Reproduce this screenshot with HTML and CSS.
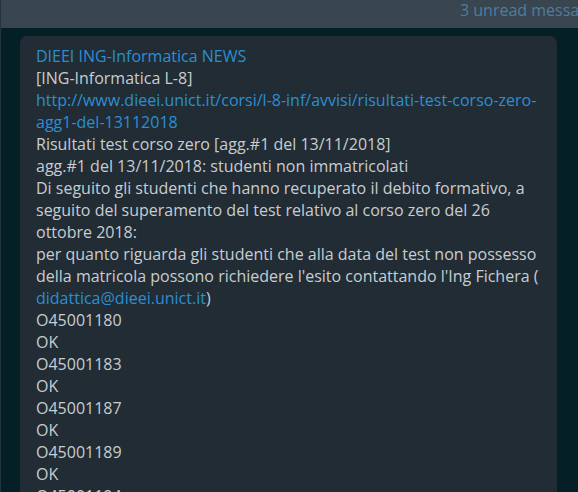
FILE: index.html
```html
<!DOCTYPE html>
<html>
<head>
<meta charset="utf-8">
<link rel="stylesheet" href="styles.css">
</head>
<body>
<div class="app">
  <div class="topbar"><span class="unread">3 unread messages</span></div>
  <div class="feed">
    <div class="bubble">
      <div class="line"><a class="link">DIEEI ING-Informatica NEWS</a></div>
      <div class="line">[ING-Informatica L-8]</div>
      <div class="line"><a class="link">http://www.dieei.unict.it/corsi/l-8-inf/avvisi/risultati-test-corso-zero-<br>agg1-del-13112018</a></div>
      <div class="line">Risultati test corso zero [agg.#1 del 13/11/2018]</div>
      <div class="line">agg.#1 del 13/11/2018: studenti non immatricolati</div>
      <div class="line">Di seguito gli studenti che hanno recuperato il debito formativo, a<br>seguito del superamento del test relativo al corso zero del 26<br>ottobre 2018:</div>
      <div class="line">per quanto riguarda gli studenti che alla data del test non possesso<br>della matricola possono richiedere l'esito contattando l'Ing Fichera (<br><a class="link">didattica@dieei.unict.it</a>)</div>
      <div class="line">O45001180</div>
      <div class="line">OK</div>
      <div class="line">O45001183</div>
      <div class="line">OK</div>
      <div class="line">O45001187</div>
      <div class="line">OK</div>
      <div class="line">O45001189</div>
      <div class="line">OK</div>
      <div class="line">O45001194</div>
      <div class="line">OK</div>
    </div>
  </div>
</div>
</body>
</html>
```

FILE: styles.css
```css
html, body {
  margin: 0;
  padding: 0;
  height: 100%;
  overflow: hidden;
  background: #051f27;
}
body {
  font-family: "Open Sans", "DejaVu Sans", sans-serif;
  font-size: 16px;
}
.app {
  height: 100%;
  border-left: 1px solid #24343d;
  display: flex;
  flex-direction: column;
}
.topbar {
  height: 26px;
  flex: none;
  background: #39454f;
  white-space: nowrap;
  overflow: hidden;
  padding-top: 2px;
  padding-left: 459px;
  line-height: 16px;
}
.unread {
  color: #4e7e9f;
  font-size: 16px;
}
.feed {
  padding: 8px 21px 0 19px;
}
.bubble {
  background: #212c35;
  border-radius: 7px;
  padding: 9px 16px 8px 16px;
  color: #c8cdd0;
  line-height: 22px;
  white-space: nowrap;
}
.link {
  color: #2b8fd2;
  text-decoration: none;
}
```
